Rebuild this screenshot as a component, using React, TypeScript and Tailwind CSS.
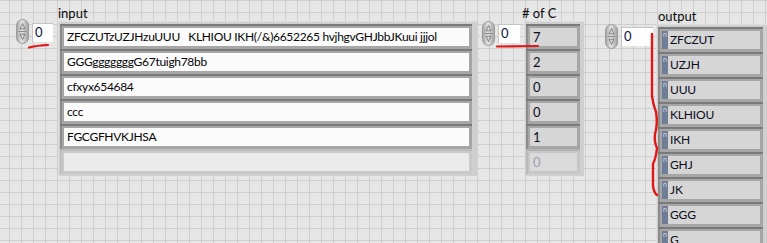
import React from "react";

function Spinner() {
  return (
    <svg width="13" height="25" viewBox="0 0 13 25" className="block">
      <defs>
        <linearGradient id="spg" x1="0" x2="1" y1="0" y2="0">
          <stop offset="0" stopColor="#a2a2a2" />
          <stop offset="0.45" stopColor="#e4e4e4" />
          <stop offset="1" stopColor="#a0a0a0" />
        </linearGradient>
      </defs>
      <rect x="0.5" y="0.5" width="12" height="24" rx="6" fill="url(#spg)" stroke="#9a9a9a" />
      <line x1="2.5" y1="12.5" x2="10.5" y2="12.5" stroke="#8c8c8c" />
      <path d="M6.5 4.5 L9 9.8 L4 9.8 Z" fill="#d8d8d8" stroke="#707070" strokeWidth="0.8" />
      <path d="M6.5 20.5 L9 15.2 L4 15.2 Z" fill="#d8d8d8" stroke="#707070" strokeWidth="0.8" />
    </svg>
  );
}

function Index({ boxW, spinTop, boxTop }: { boxW: string; spinTop: string; boxTop: string }) {
  return (
    <div className="flex items-start">
      <div className={spinTop}>
        <Spinner />
      </div>
      <div
        className={`${boxTop} ${boxW} ml-[3px] h-[19px] bg-[#fdfdfd] border-l border-t border-[#c4c4c4] pl-[2px] text-[13px] leading-[17px] text-[#0c1640]`}
      >
        0
      </div>
    </div>
  );
}

function StrCell({ text, empty }: { text: string; empty?: boolean }) {
  return (
    <div
      className={
        empty
          ? "h-[25px] pt-[4px] pl-[4px] pb-[3px] pr-[3px] bg-[#c9c9c9] shadow-[inset_0_2px_0_#bdbdbd,inset_2px_0_0_#c0c0c0]"
          : "h-[25px] pt-[4px] pl-[4px] pb-[3px] pr-[3px] bg-[#a6a6a6] shadow-[inset_0_2px_0_#7a7a7a,inset_2px_0_0_#8c8c8c]"
      }
    >
      <div
        className={
          empty
            ? "h-full bg-[#ebebeb]"
            : "h-full bg-[#fbfbfb] pl-[3px] text-[12px] tracking-[-0.3px] leading-[18px] whitespace-pre text-[#050505] overflow-hidden"
        }
      >
        {text}
      </div>
    </div>
  );
}

function NumCell({ text, dim }: { text: string; dim?: boolean }) {
  return (
    <div
      className={
        dim
          ? "h-[25px] pt-[4px] pl-[4px] pb-[3px] pr-[3px] bg-[#c6c6c6] shadow-[inset_0_2px_0_#b2b2b2,inset_2px_0_0_#b8b8b8]"
          : "h-[25px] pt-[4px] pl-[4px] pb-[3px] pr-[3px] bg-[#a6a6a6] shadow-[inset_0_2px_0_#7a7a7a,inset_2px_0_0_#8c8c8c]"
      }
    >
      <div
        className={
          dim
            ? "h-full bg-[#dadada] pl-[3px] text-[13px] leading-[18px] text-[#9aa2b4]"
            : "h-full bg-[#d6d6d6] pl-[3px] text-[13px] leading-[18px] text-[#0c0c1c]"
        }
      >
        {text}
      </div>
    </div>
  );
}

function OutCell({ text }: { text: string }) {
  return (
    <div className="h-[25px] pt-[4px] pl-[4px] pb-[3px] pr-[3px] bg-[#a6a6a6] shadow-[inset_0_2px_0_#7a7a7a,inset_2px_0_0_#8c8c8c]">
      <div className="h-full flex bg-[#d6d6d6]">
        <div className="w-[6px] h-full bg-[#6f7d97] text-[7px] leading-[8px] text-[#d4d8e0] text-center font-['DejaVu_Sans',sans-serif]">
          n
        </div>
        <div className="pl-[2px] text-[12px] tracking-[-0.15px] leading-[18px] text-[#0c0c1c]">{text}</div>
      </div>
    </div>
  );
}

const inputs = [
  "ZFCZUTzUZJHzuUUU   KLHIOU IKH(/&)6652265 hvjhgvGHJbbJKuui jjjol",
  "GGGgggggggG67tuigh78bb",
  "cfxyx654684",
  "ccc",
  "FGCGFHVKJHSA",
];
const counts = ["7", "2", "0", "0", "1"];
const outputs = ["ZFCZUT", "UZJH", "UUU", "KLHIOU", "IKH", "GHJ", "JK", "GGG", "G"];

export default function App() {
  return (
    <div className="relative w-[767px] h-[243px] overflow-hidden bg-[#e6e6e6] bg-[linear-gradient(to_right,#cfcfcf_1px,transparent_1px),linear-gradient(to_bottom,#cfcfcf_1px,transparent_1px)] bg-[size:12px_12px] bg-[position:9px_0px] font-['Lato',sans-serif]">
      <div className="flex items-start">
        {/* input cluster */}
        <div className="ml-[16px] mt-[5px] flex items-start">
          <Index boxW="w-[21px]" spinTop="mt-[14px]" boxTop="mt-[18px]" />
          <div className="ml-[5px] flex flex-col">
            <div className="h-[16px] text-[13px] leading-[16px] text-[#0a0a0a]">input</div>
            <div className="w-[419px] bg-[#cfcfcf] border-l border-t border-[#dedede] pt-[2px] pl-[1px] pr-[5px] pb-[2px]">
              {inputs.map((t, i) => (
                <StrCell key={i} text={t} />
              ))}
              <StrCell text="" empty />
            </div>
          </div>
        </div>

        {/* # of C cluster */}
        <div className="ml-[5px] mt-[5px] flex items-start">
          <Index boxW="w-[22px]" spinTop="mt-[16px]" boxTop="mt-[19px]" />
          <div className="ml-[4px] flex flex-col">
            <div className="h-[16px] text-[13px] leading-[16px] text-[#0a0a0a] -ml-[2px]">
              # of C
            </div>
            <div className="w-[60px] bg-[#cfcfcf] border-l border-t border-[#dedede] pt-[2px] pl-[1px] pr-[4px] pb-[2px]">
              {counts.map((t, i) => (
                <NumCell key={i} text={t} />
              ))}
              <NumCell text="0" dim />
            </div>
          </div>
        </div>

        {/* output cluster */}
        <div className="ml-[21px] mt-[8px] flex items-start">
          <Index boxW="w-[32px]" spinTop="mt-[16px]" boxTop="mt-[19px]" />
          <div className="ml-[3px] flex flex-col">
            <div className="h-[16px] text-[13px] leading-[16px] text-[#0a0a0a] pl-[2px]">output</div>
            <div className="w-[112px] bg-[#cfcfcf] border-l border-t border-[#dedede] pt-[2px] pl-[1px] pr-[5px] pb-[2px]">
              {outputs.map((t, i) => (
                <OutCell key={i} text={t} />
              ))}
            </div>
          </div>
        </div>
      </div>

      {/* red annotations */}
      <svg className="absolute inset-0 pointer-events-none" width="767" height="243">
        <path d="M29 47.5 Q37 45.5 48 45" stroke="#e01818" strokeWidth="2.2" fill="none" strokeLinecap="round" />
        <path d="M497 46.5 L538 46" stroke="#e01818" strokeWidth="2.2" fill="none" strokeLinecap="round" />
        <path
          d="M652 34 L652 96 Q653 104 656 112 Q658 124 655 134 Q654 142 657 148 Q656 158 653 164 L653 186 Q654 193 657 195"
          stroke="#e01818"
          strokeWidth="2.4"
          fill="none"
          strokeLinecap="round"
        />
      </svg>
    </div>
  );
}
